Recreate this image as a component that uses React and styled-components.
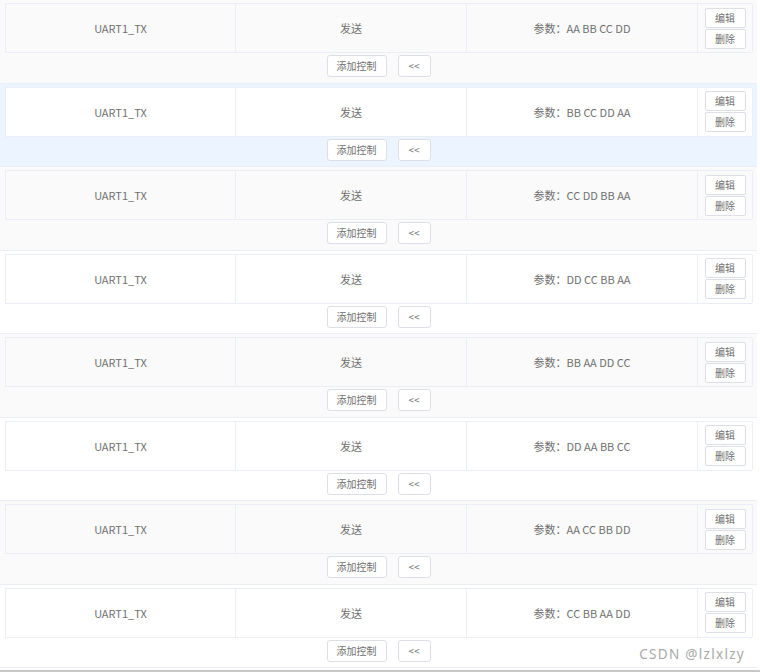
import React from "react";
import styled, { createGlobalStyle } from "styled-components";

const GlobalStyle = createGlobalStyle`
  html, body {
    margin: 0;
    padding: 0;
    background: #fff;
  }
  body {
    font-family: "Noto Sans CJK SC", "Noto Sans", sans-serif;
    color: #707070;
  }
`;

const rows = [
  "AA BB CC DD",
  "BB CC DD AA",
  "CC DD BB AA",
  "DD CC BB AA",
  "BB AA DD CC",
  "DD AA BB CC",
  "AA CC BB DD",
  "CC BB AA DD",
];

const App = () => {
  return (
    <Page>
      <GlobalStyle />
      <List>
        {rows.map((param, i) => {
          const variant = i === 1 ? "hover" : i % 2 === 0 ? "stripe" : "plain";
          return (
            <Block key={i} $variant={variant}>
              <Row>
                <Cell $variant={variant}>UART1_TX</Cell>
                <Cell $variant={variant}>发送</Cell>
                <Cell $variant={variant}>参数：{param}</Cell>
                <ActionCell $variant={variant}>
                  <SmallButton>编辑</SmallButton>
                  <SmallButton>删除</SmallButton>
                </ActionCell>
              </Row>
              <Controls>
                <Button $w={60}>添加控制</Button>
                <Button $w={33}>&lt;&lt;</Button>
              </Controls>
            </Block>
          );
        })}
      </List>
      <BottomBar />
      <Watermark>CSDN @lzlxlzy</Watermark>
    </Page>
  );
};

export default App;

const blockBg = {
  stripe: "#fafafa",
  hover: "#ecf5ff",
  plain: "#fff",
};

const Page = styled.div`
  position: relative;
  width: 760px;
  height: 672px;
  overflow: hidden;
  background: #fff;
`;

const List = styled.div`
  width: 757px;
  height: 670px;
`;

const Block = styled.div`
  box-sizing: border-box;
  height: 83.5px;
  padding: 3px 5px 0 5px;
  background: ${(p) => blockBg[p.$variant]};
  border-bottom: 1px solid #ebeef5;
  display: flex;
  flex-direction: column;
  gap: 2px;
`;

const Row = styled.div`
  display: grid;
  grid-template-columns: 230px 231px 231px 55px;
  height: 50px;
  box-sizing: border-box;
  border-top: 1px solid #ebeef5;
  border-bottom: 1px solid #ebeef5;
  border-left: 1px solid #ebeef5;
`;

const Cell = styled.div`
  display: flex;
  align-items: center;
  justify-content: center;
  border-right: 1px solid #ebeef5;
  background: ${(p) => (p.$variant === "stripe" ? "#fafafa" : "#fff")};
  font-size: 11px;
  color: #707070;
`;

const ActionCell = styled(Cell)`
  flex-direction: column;
  gap: 1px;
`;

const SmallButton = styled.button`
  box-sizing: border-box;
  width: 41px;
  height: 20px;
  padding: 0;
  border: 1px solid #dcdfe6;
  border-radius: 2px;
  background: #fff;
  color: #707070;
  font-family: inherit;
  font-size: 10px;
  line-height: 18px;
`;

const Controls = styled.div`
  display: flex;
  justify-content: center;
  gap: 11px;
  height: 22px;
`;

const Button = styled.button`
  box-sizing: border-box;
  width: ${(p) => p.$w}px;
  height: 22px;
  padding: 0;
  border: 1px solid #dcdfe6;
  border-radius: 3px;
  background: #fff;
  color: #707070;
  font-family: inherit;
  font-size: 10px;
  line-height: 20px;
`;

const BottomBar = styled.div`
  height: 2px;
  background: #c8c8c8;
`;

const Watermark = styled.div`
  position: absolute;
  right: 15px;
  bottom: 9px;
  font-family: "Noto Sans", "Liberation Sans", sans-serif;
  font-size: 13.5px;
  letter-spacing: 1.3px;
  color: #a8a8a8;
  text-shadow: 0 0 1px #fff;
`;
